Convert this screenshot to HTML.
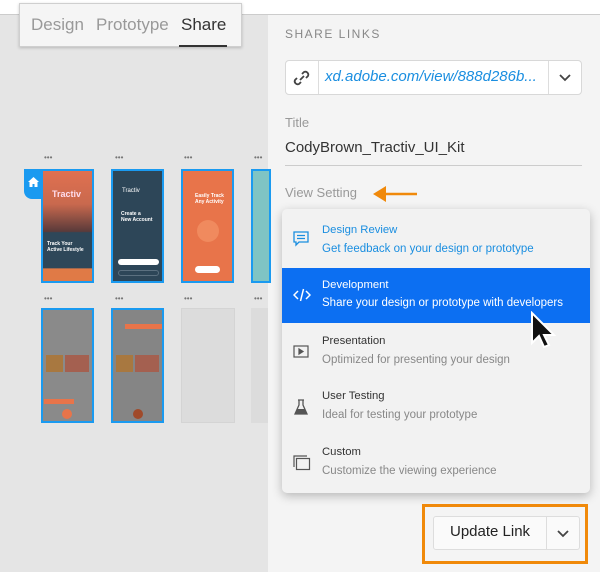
<!DOCTYPE html>
<html><head><style>
*{margin:0;padding:0;box-sizing:border-box}
body{width:600px;height:572px;position:relative;overflow:hidden;background:#fff;font-family:"Liberation Sans",sans-serif}
.abs{position:absolute}
.canvas{left:0;top:15px;width:268px;height:557px;background:#e5e5e5}
.panel{left:268px;top:15px;width:332px;height:557px;background:#f4f4f4}
.dots{font-size:8px;color:#777;line-height:6px}
.ab{border:2px solid #1a9af0}
.item{position:absolute;left:0;width:308px;height:55px}
.item .t{position:absolute;left:40px;top:14px;font-size:11.3px;color:#333}
.item .s{position:absolute;left:40px;top:33px;font-size:11.5px;color:#888}
.item svg{position:absolute;left:11px;top:20px}
</style></head><body>
<div class="abs canvas"></div>
<div class="abs panel"></div>
<div class="abs" style="left:0;top:14px;width:600px;height:1px;background:#ccc"></div>

<div class="abs" style="left:19px;top:3px;width:223px;height:44px;background:#f5f5f5;border:1px solid #cfcfcf;box-shadow:0 1px 3px rgba(0,0,0,.2)">
<span class="abs" style="left:11px;top:11px;font-size:17px;color:#999">Design</span>
<span class="abs" style="left:76px;top:11px;font-size:17px;color:#999">Prototype</span>
<span class="abs" style="left:161px;top:11px;font-size:17px;color:#333">Share</span>
<div class="abs" style="left:159px;top:41px;width:48px;height:2px;background:#333"></div>
</div>

<div class="abs dots" style="left:44px;top:155px">•••</div>
<div class="abs dots" style="left:115px;top:155px">•••</div>
<div class="abs dots" style="left:184px;top:155px">•••</div>
<div class="abs dots" style="left:254px;top:155px">•••</div>
<div class="abs" style="left:24px;top:169px;width:20px;height:30px;background:#1a9af0;border-radius:0 0 0 8px"></div>
<svg class="abs" style="left:28px;top:177px" width="11" height="10"><path d="M5.5 0L0 5h1.5v5h3V7h2v3h3V5H11z" fill="#fff"/></svg>
<div class="abs ab" style="left:41px;top:169px;width:53px;height:114px;background:linear-gradient(#e07050 0,#c9694e 30%,#5a3a3a 55%,#2e4759 56%,#2e4759 88%,#e07a46 89%)"></div>
<div class="abs" style="left:52px;top:189px;font-size:9px;color:#fde;font-weight:bold">Tractiv</div>
<div class="abs" style="left:47px;top:241px;font-size:5px;color:#fff;font-weight:bold;line-height:6px">Track Your<br>Active Lifestyle</div>
<div class="abs ab" style="left:111px;top:169px;width:53px;height:114px;background:#2d4658"></div>
<div class="abs" style="left:122px;top:188px;font-size:6px;color:#fff">Tractiv</div>
<div class="abs" style="left:121px;top:211px;font-size:5px;color:#fff;font-weight:bold;line-height:6px">Create a<br>New Account</div>
<div class="abs" style="left:118px;top:259px;width:41px;height:6px;background:#fff;border-radius:3px"></div>
<div class="abs" style="left:118px;top:270px;width:41px;height:6px;border:1px solid #5b7080;border-radius:3px"></div>
<div class="abs ab" style="left:181px;top:169px;width:53px;height:114px;background:#e8744a"></div>
<div class="abs" style="left:197px;top:220px;width:22px;height:22px;border-radius:50%;background:#f08a5e"></div>
<div class="abs" style="left:195px;top:193px;font-size:5px;color:#fff;font-weight:bold;line-height:6px">Easily Track<br>Any Activity</div>
<div class="abs" style="left:195px;top:266px;width:25px;height:7px;background:#fff;border-radius:4px"></div>
<div class="abs ab" style="left:251px;top:169px;width:20px;height:114px;background:#7fc4c4"></div>

<div class="abs dots" style="left:44px;top:296px">•••</div>
<div class="abs dots" style="left:115px;top:296px">•••</div>
<div class="abs dots" style="left:184px;top:296px">•••</div>
<div class="abs dots" style="left:254px;top:296px">•••</div>
<div class="abs ab" style="left:41px;top:308px;width:53px;height:115px;background:#8a8a8a"></div>
<div class="abs" style="left:46px;top:355px;width:17px;height:17px;background:#a87840"></div>
<div class="abs" style="left:65px;top:355px;width:24px;height:17px;background:#a46050"></div>
<div class="abs" style="left:44px;top:399px;width:30px;height:5px;background:#e8744a"></div>
<div class="abs" style="left:62px;top:409px;width:10px;height:10px;border-radius:50%;background:#e8744a"></div>
<div class="abs ab" style="left:111px;top:308px;width:53px;height:115px;background:#858585"></div>
<div class="abs" style="left:116px;top:355px;width:17px;height:17px;background:#a87840"></div>
<div class="abs" style="left:135px;top:355px;width:24px;height:17px;background:#a46050"></div>
<div class="abs" style="left:125px;top:324px;width:37px;height:5px;background:#e8744a"></div>
<div class="abs" style="left:133px;top:409px;width:10px;height:10px;border-radius:50%;background:#a04a2a"></div>
<div class="abs" style="left:181px;top:308px;width:54px;height:115px;background:#dcdcdc;border:1px solid #d4d4d4"></div>
<div class="abs" style="left:251px;top:308px;width:17px;height:115px;background:#dcdcdc"></div>

<div class="abs" style="left:285px;top:27px;font-size:12px;color:#888;letter-spacing:1.5px">SHARE LINKS</div>
<div class="abs" style="left:285px;top:60px;width:297px;height:35px;border:1px solid #d8d8d8;border-radius:4px;background:#fff"></div>
<div class="abs" style="left:318px;top:61px;width:1px;height:33px;background:#ddd"></div>
<div class="abs" style="left:548px;top:61px;width:1px;height:33px;background:#ddd"></div>
<svg class="abs" style="left:292px;top:69px" width="19" height="18" viewBox="0 0 19 18" fill="none" stroke="#444" stroke-width="1.8"><path d="M8 11l4-4"/><path d="M10 5l2-2a3 3 0 014 4l-2 2"/><path d="M9 13l-2 2a3 3 0 01-4-4l2-2"/></svg>
<div class="abs" style="left:325px;top:68px;font-size:15px;color:#1a8ee0;font-style:italic">xd.adobe.com/view/888d286b...</div>
<svg class="abs" style="left:559px;top:74px" width="12" height="8"><path d="M1 1l5 5 5-5" stroke="#444" stroke-width="1.8" fill="none"/></svg>
<div class="abs" style="left:285px;top:115px;font-size:13px;color:#999">Title</div>
<div class="abs" style="left:285px;top:139px;font-size:15px;color:#333">CodyBrown_Tractiv_UI_Kit</div>
<div class="abs" style="left:285px;top:165px;width:297px;height:1px;background:#ccc"></div>
<div class="abs" style="left:285px;top:185px;font-size:13px;color:#999">View Setting</div>
<svg class="abs" style="left:373px;top:185px" width="45" height="18"><path d="M44 9H10" stroke="#f0890a" stroke-width="2.5"/><path d="M0 9l13-8v16z" fill="#f0890a"/></svg>

<div class="abs" style="left:282px;top:209px;width:308px;height:284px;background:#f2f2f2;border-radius:5px;box-shadow:0 3px 10px rgba(0,0,0,.25)">
<div class="item" style="top:2px">
<svg width="16" height="16" viewBox="0 0 16 16" fill="none" stroke="#1a8ee0" stroke-width="1.3"><path d="M1 1h14v10H6l-3 3v-3H1z"/><path d="M4 4.5h8M4 7.5h8"/></svg>
<div class="t" style="color:#1a8ee0;top:13px">Design Review</div><div class="s" style="color:#1a8ee0;top:32px">Get feedback on your design or prototype</div></div>
<div class="item" style="top:59px;height:55px;background:#0c6ff2">
<svg width="18" height="14" viewBox="0 0 18 14" fill="none" stroke="#fff" stroke-width="1.5" style="top:20px"><path d="M5 3L1 7l4 4M13 3l4 4-4 4M10.5 1l-3 12"/></svg>
<div class="t" style="color:#fff;top:11px">Development</div><div class="s" style="color:#fff;top:29px">Share your design or prototype with developers</div></div>
<div class="item" style="top:115px">
<svg width="16" height="14" viewBox="0 0 16 14" fill="none" stroke="#555" stroke-width="1.2" style="top:21px"><rect x="1" y="1" width="14" height="11"/><path d="M6 4v5l4-2.5z" fill="#555"/></svg>
<div class="t" style="top:11px">Presentation</div><div class="s" style="top:30px">Optimized for presenting your design</div></div>
<div class="item" style="top:171px">
<svg width="14" height="16" viewBox="0 0 14 16" style="top:19px;left:12px"><path d="M4 1h6M5 1v5L1 15h12L9 6V1" fill="none" stroke="#555" stroke-width="1.3"/><path d="M3 10h8l2 5H1z" fill="#555"/></svg>
<div class="t" style="top:10px">User Testing</div><div class="s" style="top:29px">Ideal for testing your prototype</div></div>
<div class="item" style="top:226px">
<svg width="18" height="16" viewBox="0 0 18 16" fill="none" stroke="#555" stroke-width="1.2" style="top:20px"><path d="M1 12V1h13"/><rect x="3.5" y="3.5" width="13" height="11"/></svg>
<div class="t" style="top:11px">Custom</div><div class="s" style="top:30px">Customize the viewing experience</div></div>
</div>

<svg class="abs" style="left:530px;top:311px" width="30" height="40" viewBox="0 0 30 40"><path d="M2 2v30l7-7 5 11 5-2-5-10h10z" fill="#111" stroke="#fff" stroke-width="2"/></svg>

<div class="abs" style="left:422px;top:504px;width:166px;height:60px;border:3px solid #f0890a"></div>
<div class="abs" style="left:433px;top:516px;width:147px;height:34px;background:#fafafa;border:1px solid #ddd;border-radius:3px"></div>
<div class="abs" style="left:546px;top:517px;width:1px;height:32px;background:#ddd"></div>
<div class="abs" style="left:450px;top:523px;font-size:15px;color:#222">Update Link</div>
<svg class="abs" style="left:557px;top:530px" width="12" height="8"><path d="M1 1l5 5 5-5" stroke="#444" stroke-width="1.8" fill="none"/></svg>
</body></html>
